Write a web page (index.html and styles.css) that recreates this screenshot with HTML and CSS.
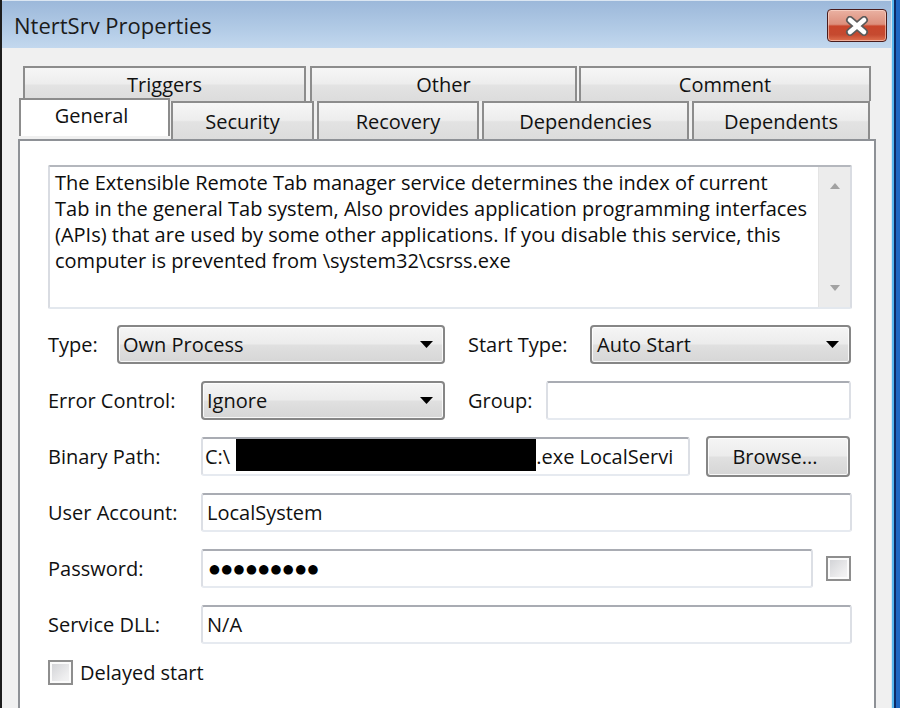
FILE: index.html
```html
<!DOCTYPE html>
<html lang="en">
<head>
<meta charset="utf-8">
<title>NtertSrv Properties</title>
<link rel="stylesheet" href="styles.css">
</head>
<body>
<div class="screen">
  <div class="window">
    <div class="titlebar">
      <span class="title">NtertSrv Properties</span>
      <div class="close" aria-label="Close">
        <svg width="26" height="20" viewBox="0 0 26 20">
          <path d="M6 4 L20 16 M20 4 L6 16" stroke="#5b5b5b" stroke-width="8" stroke-linecap="round" fill="none"/>
          <path d="M6 4 L20 16 M20 4 L6 16" stroke="#ffffff" stroke-width="4.6" stroke-linecap="round" fill="none"/>
        </svg>
      </div>
    </div>
    <div class="body">
      <div class="tabrow back">
        <div class="tab t-triggers">Triggers</div>
        <div class="tab t-other">Other</div>
        <div class="tab t-comment">Comment</div>
      </div>
      <div class="tabrow front">
        <div class="tab selected t-general">General</div>
        <div class="tab t-security">Security</div>
        <div class="tab t-recovery">Recovery</div>
        <div class="tab t-deps">Dependencies</div>
        <div class="tab t-dependents">Dependents</div>
      </div>
      <div class="panel">
        <div class="desc">
          <div class="desc-text">The Extensible Remote Tab manager service determines the index of current<br>Tab in the general Tab system, Also provides application programming interfaces<br>(APIs) that are used by some other applications. If you disable this service, this<br>computer is prevented from \system32\csrss.exe</div>
          <div class="scrollbar">
            <svg class="sarrow" width="10" height="6" viewBox="0 0 10 6"><path d="M0 6 L5 0 L10 6 Z" fill="#a2a2a2"/></svg>
            <svg class="sarrow" width="10" height="6" viewBox="0 0 10 6"><path d="M0 0 L10 0 L5 6 Z" fill="#a2a2a2"/></svg>
          </div>
        </div>

        <div class="row split">
          <div class="half left">
            <span class="label">Type:</span>
            <div class="combo w-type"><span>Own Process</span><svg width="13" height="7" viewBox="0 0 13 7"><path d="M0 0 H13 L6.5 7 Z" fill="#000"/></svg></div>
          </div>
          <div class="half right">
            <span class="label">Start Type:</span>
            <div class="combo w-start"><span>Auto Start</span><svg width="13" height="7" viewBox="0 0 13 7"><path d="M0 0 H13 L6.5 7 Z" fill="#000"/></svg></div>
          </div>
        </div>

        <div class="row split">
          <div class="half left">
            <span class="label">Error Control:</span>
            <div class="combo w-error"><span>Ignore</span><svg width="13" height="7" viewBox="0 0 13 7"><path d="M0 0 H13 L6.5 7 Z" fill="#000"/></svg></div>
          </div>
          <div class="half right">
            <span class="label">Group:</span>
            <div class="field w-group"></div>
          </div>
        </div>

        <div class="row">
          <span class="label lcol">Binary Path:</span>
          <div class="field grow path"><span>C:\</span><span class="redact"></span><span>.exe LocalServi</span></div>
          <div class="button browse">Browse...</div>
        </div>

        <div class="row">
          <span class="label lcol">User Account:</span>
          <div class="field grow stretch"><span>LocalSystem</span></div>
        </div>

        <div class="row">
          <span class="label lcol">Password:</span>
          <div class="field grow"><span class="dots">●●●●●●●●●</span></div>
          <div class="check pw-check"></div>
        </div>

        <div class="row">
          <span class="label lcol">Service DLL:</span>
          <div class="field grow stretch"><span>N/A</span></div>
        </div>

        <div class="row small">
          <div class="check"></div>
          <span class="label check-label">Delayed start</span>
        </div>
      </div>
    </div>
  </div>
  <div class="edge"></div>
</div>
</body>
</html>
```

FILE: styles.css
```css
html, body {
  margin: 0;
  padding: 0;
}

body {
  width: 900px;
  height: 708px;
  overflow: hidden;
  font-family: "Open Sans", "Noto Sans", sans-serif;
  color: #111;
  background: #f0f0f0;
}

.screen {
  display: flex;
  height: 708px;
}

.window {
  width: 891px;
  flex: none;
  box-sizing: border-box;
  border-left: 2px solid #1d1d1d;
  display: flex;
  flex-direction: column;
  background: #f0f0f0;
}

.edge {
  flex: 1;
  background: linear-gradient(to right, #d6e2ee 0 1px, #55b6ee 1px 3px, #0b2a66 3px 5px, #1d66c2 5px 100%);
}

/* ---------- title bar ---------- */
.titlebar {
  height: 48px;
  flex: none;
  box-sizing: border-box;
  border-top: 1px solid #dbe6f2;
  background: linear-gradient(#9cb8da, #b2cbe6 60%, #c3d8ee);
  display: flex;
  align-items: center;
  justify-content: space-between;
  padding-left: 12px;
}

.title {
  font-size: 22px;
  color: #1b1b1b;
}

.close {
  align-self: flex-start;
  margin-top: 8px;
  margin-right: 4px;
  width: 60px;
  height: 33px;
  box-sizing: border-box;
  border: 1px solid #4a1c1c;
  border-radius: 4px;
  background: linear-gradient(#eab1a2 0%, #dc8f7c 46%, #c9462c 52%, #c54a30 80%, #df7150 100%);
  box-shadow: inset 0 0 0 1px rgba(255, 225, 215, 0.55);
  display: flex;
  align-items: center;
  justify-content: center;
}

/* ---------- body & tabs ---------- */
.body {
  flex: 1;
  display: flex;
  flex-direction: column;
  padding: 18px 15px 0 16px;
  min-height: 0;
}

.tabrow {
  display: flex;
  flex: none;
}

.tabrow.back {
  height: 35px;
  margin-left: 5px;
}

.tabrow.front {
  height: 38px;
  margin-left: 1px;
  align-items: flex-start;
}

.tab {
  box-sizing: border-box;
  height: 100%;
  border: 2px solid #8c8c8c;
  border-bottom: none;
  background: linear-gradient(#f6f6f6, #ededed 48%, #e3e3e3 52%, #dcdcdc);
  display: flex;
  align-items: center;
  justify-content: center;
  font-size: 20px;
  color: #111;
  white-space: nowrap;
}

.t-triggers { width: 283px; margin-right: 4px; }
.t-other { width: 267px; margin-right: 2px; }
.t-comment { width: 292px; }

.t-general { width: 151px; }
.t-security { width: 143px; margin-left: 1px; }
.t-recovery { width: 162px; margin-left: 3px; }
.t-deps { width: 207px; margin-left: 3px; }
.t-dependents { width: 178px; margin-left: 3px; }

.tabrow.front .tab { height: 38px; }

.tab.selected {
  position: relative;
  z-index: 1;
  height: 43px;
  margin-top: -3px;
  padding-bottom: 6px;
  padding-right: 6px;
  background: #ffffff;
}

/* ---------- panel ---------- */
.panel {
  flex: 1;
  background: #ffffff;
  border: 2px solid #8e9196;
  border-bottom: none;
  padding: 24px 22px 0 28px;
  display: flex;
  flex-direction: column;
  gap: 17px;
}

.desc {
  flex: none;
  height: 144px;
  box-sizing: border-box;
  border: 2px solid;
  border-color: #b4b7bd #d9dce2 #e3e8ee #d9dce2;
  border-radius: 2px;
  display: flex;
  margin-bottom: -1px;
}

.desc-text {
  flex: 1;
  padding: 3px 5px;
  font-size: 20px;
  line-height: 26px;
  white-space: nowrap;
  overflow: hidden;
  color: #0d0d0d;
}

.scrollbar {
  width: 32px;
  flex: none;
  background: #ececec;
  border-left: 1px solid #e4e4e4;
  display: flex;
  flex-direction: column;
  justify-content: space-between;
  align-items: center;
  padding: 16px 0 16px;
  box-sizing: border-box;
}

/* ---------- form rows ---------- */
.row {
  flex: none;
  height: 39px;
  display: flex;
  align-items: center;
}

.row.small {
  height: 25px;
  margin-top: -1px;
}

.split .half {
  display: flex;
  align-items: center;
  justify-content: space-between;
  height: 100%;
}

.half.left { width: 397px; }
.half.right { width: 383px; margin-left: 23px; }

.label {
  font-size: 20px;
  white-space: nowrap;
  color: #111;
}

.lcol {
  width: 153px;
  flex: none;
}

.combo {
  box-sizing: border-box;
  height: 39px;
  border: 2px solid #868686;
  border-radius: 4px;
  background: linear-gradient(#f5f5f5, #ececec 48%, #e0e0e0 52%, #d6d6d6);
  box-shadow: inset 0 0 0 1px rgba(255, 255, 255, 0.8);
  display: flex;
  align-items: center;
  justify-content: space-between;
  padding: 0 10px 0 4px;
  font-size: 20px;
  color: #111;
}

.w-type { width: 328px; }
.w-error { width: 244px; }
.w-start { width: 261px; padding-left: 5px; }

.field {
  box-sizing: border-box;
  height: 39px;
  border: 2px solid;
  border-color: #a9acb3 #dcdfe5 #e6eaf0 #dcdfe5;
  border-radius: 3px;
  background: #ffffff;
  display: flex;
  align-items: center;
  padding: 0 4px;
  font-size: 20px;
  color: #111;
  white-space: nowrap;
  overflow: hidden;
}

.w-group { width: 305px; }

.grow { flex: 1; min-width: 0; }

.path { padding-left: 2px; }

.redact {
  align-self: flex-start;
  margin-top: -1px;
  width: 300px;
  height: 33px;
  flex: none;
  background: #000;
  margin-left: 6px;
}

.button {
  box-sizing: border-box;
  height: 41px;
  border: 2px solid #868686;
  border-radius: 4px;
  background: linear-gradient(#f5f5f5, #ececec 48%, #e0e0e0 52%, #d6d6d6);
  box-shadow: inset 0 0 0 1px rgba(255, 255, 255, 0.8);
  display: flex;
  align-items: center;
  justify-content: center;
  font-size: 20px;
  color: #111;
  padding-right: 6px;
}

.browse {
  width: 144px;
  flex: none;
  margin-left: 16px;
  margin-right: 2px;
}

.dots {
  font-family: "DejaVu Sans", sans-serif;
  font-size: 12.5px;
  letter-spacing: 1.4px;
  color: #000;
  padding-left: 2px;
}

.check {
  width: 25px;
  height: 25px;
  flex: none;
  box-sizing: border-box;
  border: 2px solid #8e8e8e;
  background: linear-gradient(135deg, #cfd0d4, #eeeeef 70%, #f6f6f6);
  box-shadow: inset 0 0 0 2px #fbfbfb;
}

.pw-check {
  margin-left: 13px;
  margin-right: 1px;
}

.check-label {
  margin-left: 7px;
}
```
